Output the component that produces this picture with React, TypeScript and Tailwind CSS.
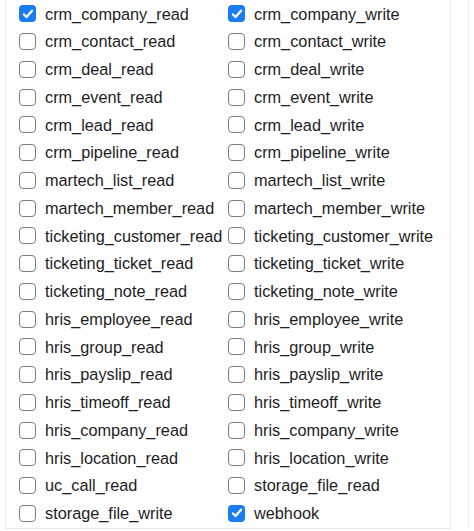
import React from 'react';

const scopes: { name: string; checked?: boolean }[] = [
  { name: 'crm_company_read', checked: true },
  { name: 'crm_company_write', checked: true },
  { name: 'crm_contact_read' },
  { name: 'crm_contact_write' },
  { name: 'crm_deal_read' },
  { name: 'crm_deal_write' },
  { name: 'crm_event_read' },
  { name: 'crm_event_write' },
  { name: 'crm_lead_read' },
  { name: 'crm_lead_write' },
  { name: 'crm_pipeline_read' },
  { name: 'crm_pipeline_write' },
  { name: 'martech_list_read' },
  { name: 'martech_list_write' },
  { name: 'martech_member_read' },
  { name: 'martech_member_write' },
  { name: 'ticketing_customer_read' },
  { name: 'ticketing_customer_write' },
  { name: 'ticketing_ticket_read' },
  { name: 'ticketing_ticket_write' },
  { name: 'ticketing_note_read' },
  { name: 'ticketing_note_write' },
  { name: 'hris_employee_read' },
  { name: 'hris_employee_write' },
  { name: 'hris_group_read' },
  { name: 'hris_group_write' },
  { name: 'hris_payslip_read' },
  { name: 'hris_payslip_write' },
  { name: 'hris_timeoff_read' },
  { name: 'hris_timeoff_write' },
  { name: 'hris_company_read' },
  { name: 'hris_company_write' },
  { name: 'hris_location_read' },
  { name: 'hris_location_write' },
  { name: 'uc_call_read' },
  { name: 'storage_file_read' },
  { name: 'storage_file_write' },
  { name: 'webhook', checked: true },
];

function Box({ checked }: { checked?: boolean }) {
  if (checked) {
    return (
      <span className="flex h-[17px] w-[17px] shrink-0 items-center justify-center rounded-[4px] bg-[#1a7cf5]">
        <svg viewBox="0 0 16 16" className="h-[14px] w-[14px]" fill="none">
          <path d="M3.4 8.5l2.9 3 6.3-7.3" stroke="white" strokeWidth="2.6" strokeLinecap="round" strokeLinejoin="round" />
        </svg>
      </span>
    );
  }
  return <span className="h-[17px] w-[17px] shrink-0 rounded-[4px] border border-[#7d7d7d] bg-white" />;
}

export default function App() {
  return (
    <div className="h-[531px] w-[474px] overflow-hidden bg-white" style={{ fontFamily: '"Liberation Sans", Arial, sans-serif' }}>
      <div className="flex h-[529px]">
        <div className="ml-[5px] w-[446px] border-x border-b border-[#ececec] pl-[13px] pr-[13px]">
          <div className="grid grid-cols-2">
            {scopes.map((s) => (
              <label key={s.name} className="flex h-[27.75px] items-center gap-[9px] text-[16.3px] text-[#1d1d1f] whitespace-nowrap">
                <Box checked={s.checked} />
                <span>{s.name}</span>
              </label>
            ))}
          </div>
        </div>
        <div className="ml-[17px] w-px border-l border-[#ececec]" />
      </div>
    </div>
  );
}
